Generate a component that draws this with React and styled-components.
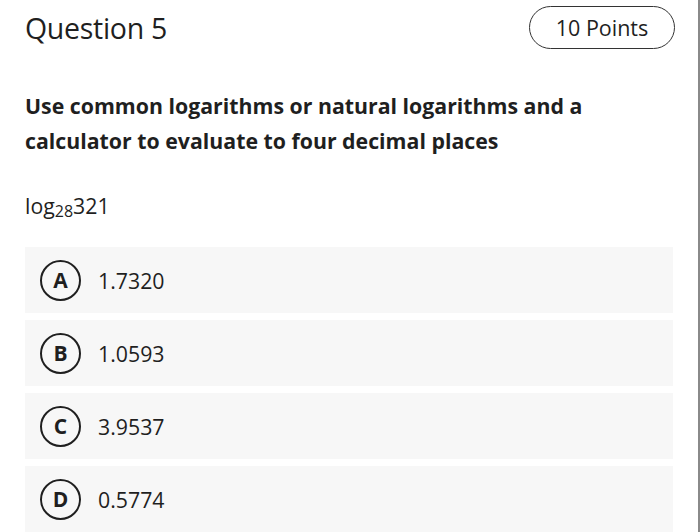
import styled, { createGlobalStyle } from 'styled-components';

const GlobalStyle = createGlobalStyle`
	html, body {
		margin: 0;
		padding: 0;
		background: #ffffff;
	}

	body {
		font-family: 'Open Sans', 'Noto Sans', sans-serif;
		color: #1f1f1f;
	}
`;

const Page = styled.div`
	width: 700px;
	height: 532px;
	box-sizing: border-box;
	padding: 6px 25px 0 25px;
	overflow: hidden;
	border-right: 2px solid #8a8a8a;
`;

const Header = styled.div`
	display: flex;
	align-items: center;
	justify-content: space-between;
	margin-bottom: 39px;
`;

const Title = styled.h2`
	margin: 0;
	font-size: 28.5px;
	font-weight: 400;
	letter-spacing: -0.3px;
`;

const Points = styled.div`
	display: flex;
	align-items: center;
	justify-content: center;
	width: 146px;
	height: 43px;
	box-sizing: border-box;
	border: 1.5px solid #333333;
	border-radius: 22px;
	font-size: 21.5px;
	margin-right: -2px;
`;

const Prompt = styled.p`
	margin: 0 0 33px 0;
	font-size: 21.3px;
	font-weight: 700;
	line-height: 35px;
	max-width: 610px;
`;

const Expression = styled.div`
	font-size: 21.3px;
	line-height: 30px;
	margin-bottom: 26px;

	sub {
		font-size: 16px;
		vertical-align: -3px;
		line-height: 0;
	}
`;

const Options = styled.div`
	display: flex;
	flex-direction: column;
	gap: 7px;
`;

const Option = styled.div`
	display: flex;
	align-items: center;
	height: 66px;
	padding-left: 15px;
	background: #f7f7f7;
`;

const Letter = styled.span`
	display: flex;
	align-items: center;
	justify-content: center;
	width: 37px;
	height: 37px;
	border: 2.5px solid #1f1f1f;
	border-radius: 50%;
	font-size: 21px;
	font-weight: 700;
	margin-right: 17px;
	flex-shrink: 0;
`;

const Answer = styled.span`
	font-size: 21.3px;
`;

const answers = [
	{ key: 'A', value: '1.7320' },
	{ key: 'B', value: '1.0593' },
	{ key: 'C', value: '3.9537' },
	{ key: 'D', value: '0.5774' },
];

const App = () => {
	return (
		<>
			<GlobalStyle />
			<Page>
				<Header>
					<Title>Question 5</Title>
					<Points>10 Points</Points>
				</Header>

				<Prompt>
					Use common logarithms or natural logarithms and a calculator
					to evaluate to four decimal places
				</Prompt>

				<Expression>
					log<sub>28</sub>321
				</Expression>

				<Options>
					{answers.map((a) => (
						<Option key={a.key}>
							<Letter>{a.key}</Letter>
							<Answer>{a.value}</Answer>
						</Option>
					))}
				</Options>
			</Page>
		</>
	);
};

export default App;
